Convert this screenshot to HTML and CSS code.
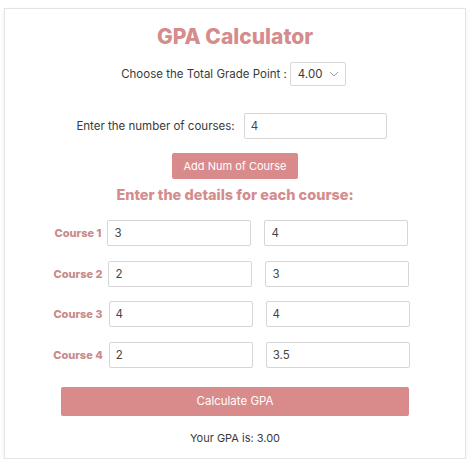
FILE: index.html
```html
<!DOCTYPE html>
<html lang="en">
<head>
  <meta charset="UTF-8" />
  <meta name="viewport" content="width=device-width, initial-scale=1.0"/>
  <title>GPA Calculator</title>
  <link rel="stylesheet" href="styles.css">
</head>
<body>

  <div class="card">
    <h1>GPA Calculator</h1>

    <div class="scale-row">
      <label for="scale">Choose the Total Grade Point :</label>
      <div class="select-box">
        <span id="scale">4.00</span>
        <svg width="10" height="6" viewBox="0 0 10 6"><path d="M1 1 L5 5 L9 1" fill="none" stroke="#9a9a9a" stroke-width="1"/></svg>
      </div>
    </div>

    <div class="row count-row">
      <label for="count">Enter the number of courses:</label>
      <input type="text" id="count" value="4" />
    </div>

    <button class="btn add-btn">Add Num of Course</button>

    <h2>Enter the details for each course:</h2>

    <div class="courses">
      <div class="row course">
        <label>Course 1</label>
        <input type="text" value="3" />
        <input type="text" value="4" />
      </div>
      <div class="row course">
        <label>Course 2</label>
        <input type="text" value="2" />
        <input type="text" value="3" />
      </div>
      <div class="row course">
        <label>Course 3</label>
        <input type="text" value="4" />
        <input type="text" value="4" />
      </div>
      <div class="row course">
        <label>Course 4</label>
        <input type="text" value="2" />
        <input type="text" value="3.5" />
      </div>
    </div>

    <button class="btn calc-btn">Calculate GPA</button>

    <p class="result">Your GPA is: 3.00</p>
  </div>

</body>
</html>
```

FILE: styles.css
```css
body {
  margin: 0;
  font-family: 'Inter', 'Noto Sans', sans-serif;
  background-color: #ffffff;
  color: #444;
}

.card {
  box-sizing: border-box;
  width: 462px;
  height: 451px;
  margin: 8px 0 0 4px;
  padding-top: 16px;
  border: 1px solid #e4e4e4;
  box-shadow: 0 2px 5px rgba(0,0,0,0.08);
  text-align: center;
}

h1 {
  margin: 0;
  font-size: 21px;
  line-height: 24px;
  font-weight: 800;
  color: #d48c8c;
}

.scale-row {
  display: flex;
  justify-content: center;
  align-items: center;
  gap: 3px;
  margin-top: 13px;
  padding-right: 3px;
  font-size: 11.5px;
  color: #3a3a3a;
}

.select-box {
  box-sizing: border-box;
  display: flex;
  align-items: center;
  justify-content: space-between;
  width: 56px;
  height: 24px;
  padding: 0 6px 0 7px;
  border: 1px solid #d8d8d8;
  border-radius: 2px;
  font-size: 11.5px;
  color: #3a3a3a;
}

.row {
  display: flex;
  justify-content: center;
  align-items: center;
  padding-right: 7px;
}

.count-row {
  margin-top: 27px;
  gap: 9px;
  font-size: 11.5px;
  color: #3a3a3a;
}

input {
  box-sizing: border-box;
  height: 26px;
  padding: 0 6px;
  border: 1px solid #d6d6d6;
  border-radius: 2px;
  font-family: inherit;
  font-size: 11.5px;
  color: #444;
  background: #fff;
}

.count-row input {
  width: 143px;
}

.btn {
  display: block;
  margin-left: auto;
  margin-right: auto;
  border: none;
  border-radius: 2px;
  background-color: #d98a8a;
  color: #fff;
  font-family: inherit;
  font-size: 11px;
}

.add-btn {
  margin-top: 14px;
  width: 126px;
  height: 26px;
}

h2 {
  margin: 6px 0 0;
  font-size: 14.5px;
  line-height: 20px;
  font-weight: 800;
  color: #d48c8c;
}

.courses {
  margin-top: 15px;
  display: flex;
  flex-direction: column;
  gap: 14.5px;
}

.course label {
  font-size: 11px;
  font-weight: 800;
  color: #c98a8a;
  margin-right: 6px;
}

.course input {
  width: 144px;
}

.course input + input {
  margin-left: 13px;
}

.calc-btn {
  margin-top: 19px;
  width: 348px;
  height: 29px;
  font-size: 11.5px;
}

.result {
  margin: 14px 0 0;
  font-size: 11px;
  line-height: 16px;
  color: #3a3a3a;
}
```
